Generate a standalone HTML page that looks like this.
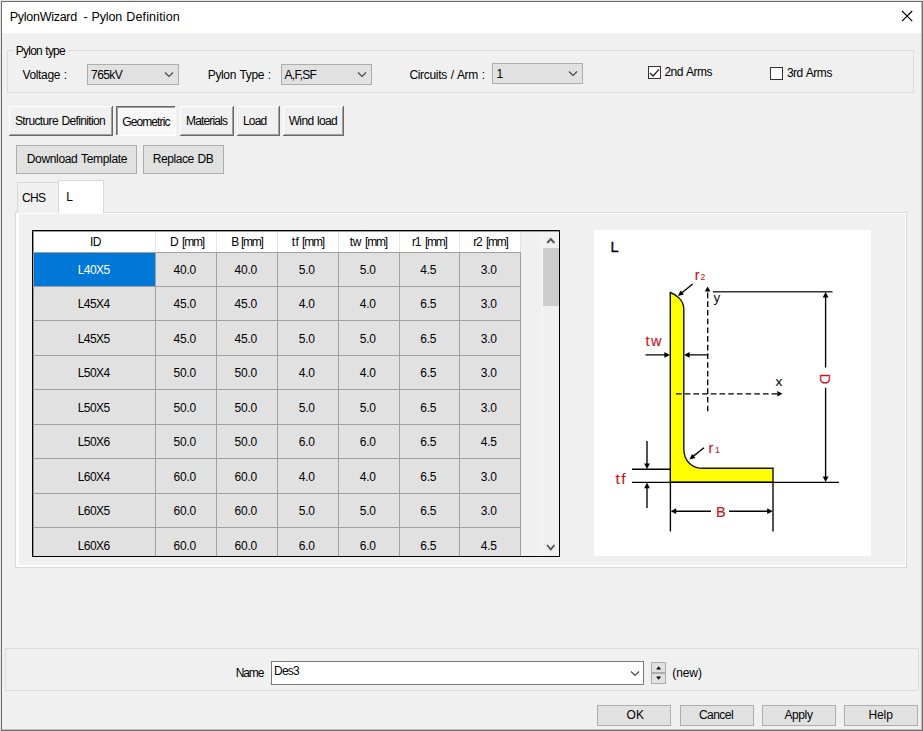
<!DOCTYPE html>
<html><head><meta charset="utf-8"><title>PylonWizard - Pylon Definition</title>
<style>
html,body{margin:0;padding:0;background:#f0f0f0;}
#w{position:relative;width:923px;height:731px;overflow:hidden;font-family:"Liberation Sans", sans-serif;font-size:12px;}
#w div,#w span,#w svg{position:absolute;}
#w span{white-space:pre;line-height:20px;word-spacing:0.8px;}
</style></head><body><div id="w">
<div style="left:0;top:0;width:923px;height:731px;background:#e3e3e3"></div>
<div style="left:1px;top:1px;width:922px;height:730px;background:#6d6d6d"></div>
<div style="left:2px;top:2px;width:920px;height:728px;background:#c0c0c0"></div>
<div style="left:2px;top:2px;width:919px;height:727px;background:#f0f0f0"></div>
<div style="left:2px;top:2px;width:919px;height:31px;background:#fff"></div>
<span style="left:9.80px;top:7.00px;font-size:12.5px;color:#000;letter-spacing:-0.277px;">PylonWizard</span>
<span style="left:83.60px;top:7.00px;font-size:12.5px;color:#000;letter-spacing:0.000px;">-</span>
<span style="left:91.50px;top:7.00px;font-size:12.5px;color:#000;letter-spacing:-0.145px;">Pylon</span>
<span style="left:126.20px;top:7.00px;font-size:12.5px;color:#000;letter-spacing:0.164px;">Definition</span>
<svg style="left:900px;top:9px" width="16" height="16" viewBox="0 0 16 16"><path d="M2 2 L12.2 12.2 M12.2 2 L2 12.2" stroke="#000" stroke-width="1.15" fill="none"/></svg>
<div style="left:7px;top:50px;width:907px;height:43px;border:1px solid #dcdcdc;box-sizing:border-box"></div>
<div style="left:14px;top:44px;width:54px;height:14px;background:#f0f0f0"></div>
<span style="left:15.80px;top:41.00px;font-size:12px;color:#000;letter-spacing:-0.772px;">Pylon type</span>
<span style="left:22.40px;top:65.00px;font-size:12px;color:#000;letter-spacing:-0.339px;">Voltage :</span>
<span style="left:207.80px;top:65.00px;font-size:12px;color:#000;letter-spacing:-0.375px;">Pylon Type :</span>
<span style="left:409.40px;top:65.00px;font-size:12px;color:#000;letter-spacing:-0.314px;">Circuits / Arm :</span>
<div style="left:87px;top:64px;width:92px;height:21px;background:#e1e1e1;border:1px solid #adadad;box-sizing:border-box"></div>
<svg style="left:163px;top:70.0px" width="12" height="9" viewBox="0 0 12 9"><path d="M2 2.5 L6 6.5 L10 2.5" stroke="#444" stroke-width="1.1" fill="none"/></svg>
<span style="left:91.10px;top:65.00px;font-size:12px;color:#000;letter-spacing:-0.608px;">765kV</span>
<div style="left:281px;top:64px;width:91px;height:21px;background:#e1e1e1;border:1px solid #adadad;box-sizing:border-box"></div>
<svg style="left:356px;top:70.0px" width="12" height="9" viewBox="0 0 12 9"><path d="M2 2.5 L6 6.5 L10 2.5" stroke="#444" stroke-width="1.1" fill="none"/></svg>
<span style="left:284.60px;top:65.00px;font-size:12px;color:#000;letter-spacing:-0.743px;">A,F,SF</span>
<div style="left:492px;top:63px;width:91px;height:21px;background:#e1e1e1;border:1px solid #adadad;box-sizing:border-box"></div>
<svg style="left:567px;top:69.0px" width="12" height="9" viewBox="0 0 12 9"><path d="M2 2.5 L6 6.5 L10 2.5" stroke="#444" stroke-width="1.1" fill="none"/></svg>
<span style="left:496.40px;top:64.00px;font-size:12px;color:#000;letter-spacing:0.000px;">1</span>
<div style="left:648px;top:66px;width:13px;height:13px;background:#fff;border:1px solid #333;box-sizing:border-box"></div>
<svg style="left:648px;top:66px" width="13" height="13" viewBox="0 0 13 13"><path d="M2 7 L5.1 10 L11 3.4" stroke="#222" stroke-width="1.3" fill="none"/></svg>
<span style="left:664.40px;top:62.00px;font-size:12px;color:#000;letter-spacing:-0.500px;">2nd Arms</span>
<div style="left:770px;top:67px;width:13px;height:13px;background:#fff;border:1px solid #333;box-sizing:border-box"></div>
<span style="left:786.90px;top:63.00px;font-size:12px;color:#000;letter-spacing:-0.473px;">3rd Arms</span>
<div style="left:9px;top:106px;width:104px;height:30px;background:#696969"></div>
<div style="left:9px;top:106px;width:103px;height:29px;background:#fff"></div>
<div style="left:10px;top:107px;width:102px;height:28px;background:#a0a0a0"></div>
<div style="left:10px;top:107px;width:101px;height:27px;background:#f0f0f0"></div>
<span style="left:15.00px;top:111.00px;font-size:12px;color:#000;letter-spacing:-0.640px;">Structure Definition</span>
<div style="left:116px;top:106px;width:60px;height:30px;background:#fff"></div>
<div style="left:116px;top:106px;width:59px;height:29px;background:#696969"></div>
<div style="left:117px;top:107px;width:58px;height:28px;background:#a0a0a0"></div>
<div style="left:118px;top:108px;width:57px;height:27px;background:#f8f8f8"></div>
<span style="left:122.30px;top:112.00px;font-size:12px;color:#000;letter-spacing:-0.907px;">Geometric</span>
<div style="left:180px;top:106px;width:54px;height:30px;background:#696969"></div>
<div style="left:180px;top:106px;width:53px;height:29px;background:#fff"></div>
<div style="left:181px;top:107px;width:52px;height:28px;background:#a0a0a0"></div>
<div style="left:181px;top:107px;width:51px;height:27px;background:#f0f0f0"></div>
<span style="left:186.00px;top:111.00px;font-size:12px;color:#000;letter-spacing:-0.848px;">Materials</span>
<div style="left:237px;top:106px;width:43px;height:30px;background:#696969"></div>
<div style="left:237px;top:106px;width:42px;height:29px;background:#fff"></div>
<div style="left:238px;top:107px;width:41px;height:28px;background:#a0a0a0"></div>
<div style="left:238px;top:107px;width:40px;height:27px;background:#f0f0f0"></div>
<span style="left:242.90px;top:111.00px;font-size:12px;color:#000;letter-spacing:-0.768px;">Load</span>
<div style="left:283px;top:106px;width:61px;height:30px;background:#696969"></div>
<div style="left:283px;top:106px;width:60px;height:29px;background:#fff"></div>
<div style="left:284px;top:107px;width:59px;height:28px;background:#a0a0a0"></div>
<div style="left:284px;top:107px;width:58px;height:27px;background:#f0f0f0"></div>
<span style="left:288.70px;top:111.00px;font-size:12px;color:#000;letter-spacing:-0.646px;">Wind load</span>
<div style="left:16px;top:145px;width:121px;height:29px;background:#e1e1e1;border:1px solid #adadad;box-sizing:border-box"></div>
<span style="left:26.70px;top:149.00px;font-size:12px;color:#000;letter-spacing:-0.324px;">Download Template</span>
<div style="left:143px;top:145px;width:81px;height:29px;background:#e1e1e1;border:1px solid #adadad;box-sizing:border-box"></div>
<span style="left:152.70px;top:149.00px;font-size:12px;color:#000;letter-spacing:-0.427px;">Replace DB</span>
<div style="left:15px;top:212px;width:892px;height:356px;background:#fff;border:1px solid #d9d9d9;box-sizing:border-box"></div>
<div style="left:19px;top:214px;width:886px;height:351px;background:#f0f0f0"></div>
<div style="left:17px;top:182px;width:42px;height:31px;background:#f0f0f0;border:1px solid #d9d9d9;border-bottom:none;box-sizing:border-box"></div>
<div style="left:58px;top:180px;width:46px;height:34px;background:#fff;border:1px solid #d9d9d9;border-bottom:none;box-sizing:border-box"></div>
<span style="left:22.00px;top:188.00px;font-size:12px;color:#000;letter-spacing:-0.722px;">CHS</span>
<span style="left:66.20px;top:187.00px;font-size:12px;color:#000;letter-spacing:0.000px;">L</span>
<div style="left:32px;top:230px;width:528px;height:327px;background:#f0f0f0;border:1px solid #000;box-sizing:border-box"></div>
<div style="left:33px;top:231px;width:487px;height:21px;background:#fff"></div>
<div style="left:33px;top:231px;width:526px;height:1px;background:#9a9a9a"></div>
<div style="left:33px;top:231px;width:1px;height:325px;background:#9a9a9a"></div>
<div style="left:155px;top:232px;width:1px;height:20px;background:#e5e5e5"></div>
<div style="left:216px;top:232px;width:1px;height:20px;background:#e5e5e5"></div>
<div style="left:277px;top:232px;width:1px;height:20px;background:#e5e5e5"></div>
<div style="left:338px;top:232px;width:1px;height:20px;background:#e5e5e5"></div>
<div style="left:399px;top:232px;width:1px;height:20px;background:#e5e5e5"></div>
<div style="left:459px;top:232px;width:1px;height:20px;background:#e5e5e5"></div>
<div style="left:520px;top:232px;width:1px;height:20px;background:#e5e5e5"></div>
<div style="left:34px;top:252px;width:487px;height:304px;background:#e1e1e1"></div>
<div style="left:34px;top:253px;width:121px;height:33px;background:#0078d7"></div>
<div style="left:34px;top:252px;width:487px;height:1px;background:#a0a0a0"></div>
<div style="left:34px;top:286px;width:487px;height:1px;background:#a0a0a0"></div>
<div style="left:34px;top:320px;width:487px;height:1px;background:#a0a0a0"></div>
<div style="left:34px;top:355px;width:487px;height:1px;background:#a0a0a0"></div>
<div style="left:34px;top:389px;width:487px;height:1px;background:#a0a0a0"></div>
<div style="left:34px;top:424px;width:487px;height:1px;background:#a0a0a0"></div>
<div style="left:34px;top:458px;width:487px;height:1px;background:#a0a0a0"></div>
<div style="left:34px;top:493px;width:487px;height:1px;background:#a0a0a0"></div>
<div style="left:34px;top:527px;width:487px;height:1px;background:#a0a0a0"></div>
<div style="left:155px;top:252px;width:1px;height:304px;background:#a0a0a0"></div>
<div style="left:216px;top:252px;width:1px;height:304px;background:#a0a0a0"></div>
<div style="left:277px;top:252px;width:1px;height:304px;background:#a0a0a0"></div>
<div style="left:338px;top:252px;width:1px;height:304px;background:#a0a0a0"></div>
<div style="left:399px;top:252px;width:1px;height:304px;background:#a0a0a0"></div>
<div style="left:459px;top:252px;width:1px;height:304px;background:#a0a0a0"></div>
<div style="left:520px;top:252px;width:1px;height:304px;background:#a0a0a0"></div>
<span style="left:90.00px;top:232.00px;font-size:12px;color:#000;letter-spacing:-0.700px;">ID</span>
<span style="left:169.90px;top:232.00px;font-size:12px;color:#000;letter-spacing:0.000px;">D</span>
<span style="left:182.00px;top:232.00px;font-size:12px;color:#000;letter-spacing:-1.200px;">[mm]</span>
<span style="left:231.30px;top:232.00px;font-size:12px;color:#000;letter-spacing:0.000px;">B</span>
<span style="left:240.90px;top:232.00px;font-size:12px;color:#000;letter-spacing:-1.200px;">[mm]</span>
<span style="left:291.80px;top:232.00px;font-size:12px;color:#000;letter-spacing:0.428px;">tf</span>
<span style="left:302.00px;top:232.00px;font-size:12px;color:#000;letter-spacing:-1.200px;">[mm]</span>
<span style="left:349.80px;top:232.00px;font-size:12px;color:#000;letter-spacing:-0.400px;">tw</span>
<span style="left:365.00px;top:232.00px;font-size:12px;color:#000;letter-spacing:-1.200px;">[mm]</span>
<span style="left:411.90px;top:232.00px;font-size:12px;color:#000;letter-spacing:-1.200px;">r1</span>
<span style="left:424.90px;top:232.00px;font-size:12px;color:#000;letter-spacing:-1.200px;">[mm]</span>
<span style="left:473.20px;top:232.00px;font-size:12px;color:#000;letter-spacing:-1.200px;">r2</span>
<span style="left:485.90px;top:232.00px;font-size:12px;color:#000;letter-spacing:-1.200px;">[mm]</span>
<span style="left:77.65px;top:260.00px;font-size:12px;color:#fff;letter-spacing:-0.551px;">L40X5</span>
<span style="left:173.50px;top:260.00px;font-size:12px;color:#000;letter-spacing:-0.186px;">40.0</span>
<span style="left:234.50px;top:260.00px;font-size:12px;color:#000;letter-spacing:-0.186px;">40.0</span>
<span style="left:298.80px;top:260.00px;font-size:12px;color:#000;letter-spacing:-0.244px;">5.0</span>
<span style="left:359.80px;top:260.00px;font-size:12px;color:#000;letter-spacing:-0.244px;">5.0</span>
<span style="left:420.30px;top:260.00px;font-size:12px;color:#000;letter-spacing:-0.244px;">4.5</span>
<span style="left:480.80px;top:260.00px;font-size:12px;color:#000;letter-spacing:-0.244px;">3.0</span>
<span style="left:77.65px;top:294.00px;font-size:12px;color:#000;letter-spacing:-0.551px;">L45X4</span>
<span style="left:173.50px;top:294.00px;font-size:12px;color:#000;letter-spacing:-0.186px;">45.0</span>
<span style="left:234.50px;top:294.00px;font-size:12px;color:#000;letter-spacing:-0.186px;">45.0</span>
<span style="left:298.80px;top:294.00px;font-size:12px;color:#000;letter-spacing:-0.244px;">4.0</span>
<span style="left:359.80px;top:294.00px;font-size:12px;color:#000;letter-spacing:-0.244px;">4.0</span>
<span style="left:420.30px;top:294.00px;font-size:12px;color:#000;letter-spacing:-0.244px;">6.5</span>
<span style="left:480.80px;top:294.00px;font-size:12px;color:#000;letter-spacing:-0.244px;">3.0</span>
<span style="left:77.65px;top:329.00px;font-size:12px;color:#000;letter-spacing:-0.551px;">L45X5</span>
<span style="left:173.50px;top:329.00px;font-size:12px;color:#000;letter-spacing:-0.186px;">45.0</span>
<span style="left:234.50px;top:329.00px;font-size:12px;color:#000;letter-spacing:-0.186px;">45.0</span>
<span style="left:298.80px;top:329.00px;font-size:12px;color:#000;letter-spacing:-0.244px;">5.0</span>
<span style="left:359.80px;top:329.00px;font-size:12px;color:#000;letter-spacing:-0.244px;">5.0</span>
<span style="left:420.30px;top:329.00px;font-size:12px;color:#000;letter-spacing:-0.244px;">6.5</span>
<span style="left:480.80px;top:329.00px;font-size:12px;color:#000;letter-spacing:-0.244px;">3.0</span>
<span style="left:77.65px;top:363.00px;font-size:12px;color:#000;letter-spacing:-0.551px;">L50X4</span>
<span style="left:173.50px;top:363.00px;font-size:12px;color:#000;letter-spacing:-0.186px;">50.0</span>
<span style="left:234.50px;top:363.00px;font-size:12px;color:#000;letter-spacing:-0.186px;">50.0</span>
<span style="left:298.80px;top:363.00px;font-size:12px;color:#000;letter-spacing:-0.244px;">4.0</span>
<span style="left:359.80px;top:363.00px;font-size:12px;color:#000;letter-spacing:-0.244px;">4.0</span>
<span style="left:420.30px;top:363.00px;font-size:12px;color:#000;letter-spacing:-0.244px;">6.5</span>
<span style="left:480.80px;top:363.00px;font-size:12px;color:#000;letter-spacing:-0.244px;">3.0</span>
<span style="left:77.65px;top:398.00px;font-size:12px;color:#000;letter-spacing:-0.551px;">L50X5</span>
<span style="left:173.50px;top:398.00px;font-size:12px;color:#000;letter-spacing:-0.186px;">50.0</span>
<span style="left:234.50px;top:398.00px;font-size:12px;color:#000;letter-spacing:-0.186px;">50.0</span>
<span style="left:298.80px;top:398.00px;font-size:12px;color:#000;letter-spacing:-0.244px;">5.0</span>
<span style="left:359.80px;top:398.00px;font-size:12px;color:#000;letter-spacing:-0.244px;">5.0</span>
<span style="left:420.30px;top:398.00px;font-size:12px;color:#000;letter-spacing:-0.244px;">6.5</span>
<span style="left:480.80px;top:398.00px;font-size:12px;color:#000;letter-spacing:-0.244px;">3.0</span>
<span style="left:77.65px;top:432.00px;font-size:12px;color:#000;letter-spacing:-0.551px;">L50X6</span>
<span style="left:173.50px;top:432.00px;font-size:12px;color:#000;letter-spacing:-0.186px;">50.0</span>
<span style="left:234.50px;top:432.00px;font-size:12px;color:#000;letter-spacing:-0.186px;">50.0</span>
<span style="left:298.80px;top:432.00px;font-size:12px;color:#000;letter-spacing:-0.244px;">6.0</span>
<span style="left:359.80px;top:432.00px;font-size:12px;color:#000;letter-spacing:-0.244px;">6.0</span>
<span style="left:420.30px;top:432.00px;font-size:12px;color:#000;letter-spacing:-0.244px;">6.5</span>
<span style="left:480.80px;top:432.00px;font-size:12px;color:#000;letter-spacing:-0.244px;">4.5</span>
<span style="left:77.65px;top:467.00px;font-size:12px;color:#000;letter-spacing:-0.551px;">L60X4</span>
<span style="left:173.50px;top:467.00px;font-size:12px;color:#000;letter-spacing:-0.186px;">60.0</span>
<span style="left:234.50px;top:467.00px;font-size:12px;color:#000;letter-spacing:-0.186px;">60.0</span>
<span style="left:298.80px;top:467.00px;font-size:12px;color:#000;letter-spacing:-0.244px;">4.0</span>
<span style="left:359.80px;top:467.00px;font-size:12px;color:#000;letter-spacing:-0.244px;">4.0</span>
<span style="left:420.30px;top:467.00px;font-size:12px;color:#000;letter-spacing:-0.244px;">6.5</span>
<span style="left:480.80px;top:467.00px;font-size:12px;color:#000;letter-spacing:-0.244px;">3.0</span>
<span style="left:77.65px;top:501.00px;font-size:12px;color:#000;letter-spacing:-0.551px;">L60X5</span>
<span style="left:173.50px;top:501.00px;font-size:12px;color:#000;letter-spacing:-0.186px;">60.0</span>
<span style="left:234.50px;top:501.00px;font-size:12px;color:#000;letter-spacing:-0.186px;">60.0</span>
<span style="left:298.80px;top:501.00px;font-size:12px;color:#000;letter-spacing:-0.244px;">5.0</span>
<span style="left:359.80px;top:501.00px;font-size:12px;color:#000;letter-spacing:-0.244px;">5.0</span>
<span style="left:420.30px;top:501.00px;font-size:12px;color:#000;letter-spacing:-0.244px;">6.5</span>
<span style="left:480.80px;top:501.00px;font-size:12px;color:#000;letter-spacing:-0.244px;">3.0</span>
<span style="left:77.65px;top:536.00px;font-size:12px;color:#000;letter-spacing:-0.551px;">L60X6</span>
<span style="left:173.50px;top:536.00px;font-size:12px;color:#000;letter-spacing:-0.186px;">60.0</span>
<span style="left:234.50px;top:536.00px;font-size:12px;color:#000;letter-spacing:-0.186px;">60.0</span>
<span style="left:298.80px;top:536.00px;font-size:12px;color:#000;letter-spacing:-0.244px;">6.0</span>
<span style="left:359.80px;top:536.00px;font-size:12px;color:#000;letter-spacing:-0.244px;">6.0</span>
<span style="left:420.30px;top:536.00px;font-size:12px;color:#000;letter-spacing:-0.244px;">6.5</span>
<span style="left:480.80px;top:536.00px;font-size:12px;color:#000;letter-spacing:-0.244px;">4.5</span>
<div style="left:542px;top:232px;width:1px;height:324px;background:#f8f8f8"></div>
<div style="left:543px;top:248px;width:15.5px;height:58px;background:#cdcdcd"></div>
<svg style="left:543px;top:234px" width="16" height="12" viewBox="0 0 16 12"><path d="M4.2 9 L7.8 5 L11.4 9" stroke="#555" stroke-width="1.9" fill="none"/></svg>
<svg style="left:543px;top:541px" width="16" height="12" viewBox="0 0 16 12"><path d="M4.2 4 L7.8 8.5 L11.4 4" stroke="#555" stroke-width="1.9" fill="none"/></svg>
<div style="left:32px;top:556px;width:528px;height:1px;background:#000"></div>
<div style="left:594px;top:230px;width:277px;height:326px;background:#fff"></div>
<span style="left:610.40px;top:237.00px;font-size:14.5px;color:#000;letter-spacing:0.000px;-webkit-text-stroke:0.3px currentColor">L</span>
<svg style="left:594px;top:230px" width="277" height="326" viewBox="594 230 277 326">
<path d="M670.3 292.5 C676 294.5 683.8 300 683.8 309 L683.8 449 C683.8 461 692 468.3 703 468.3 L773 468.3 L773 482.3 L670.3 482.3 Z" fill="#ffff00" stroke="#111" stroke-width="1.4"/>
<g stroke="#000" stroke-width="1.35" fill="none">
<path d="M713 291.7 H832.5" stroke="#333" stroke-width="1.6"/>
<path d="M825.6 296 V367.5 M825.6 387.7 V478"/>
<path d="M632 469.2 H670 M632 482.3 H839"/>
<path d="M647 441 V465 M647 508 V487"/>
<path d="M670.4 482.3 V531.5 M773 482.3 V531.5"/>
<path d="M675 511.2 H711 M729 511.2 H768"/>
<path d="M645.5 354.9 H665.5 M708.4 354.9 H688.5"/>
<path d="M692.7 283.9 L681 293.5"/>
<path d="M704 447.7 L692.5 456.9"/>
<path d="M707.7 292.6 V413.5" stroke-dasharray="5.6 3.1"/>
<path d="M676 393.8 H778" stroke-dasharray="5.6 3.1"/>
</g>
<g fill="#000" stroke="none">
<path d="M825.6 292.0 L828.5 297.6 L822.7 297.6 Z"/>
<path d="M825.6 482.0 L822.7 476.4 L828.5 476.4 Z"/>
<path d="M647.0 469.0 L644.1 463.4 L649.9 463.4 Z"/>
<path d="M647.0 482.6 L649.9 488.2 L644.1 488.2 Z"/>
<path d="M670.6 511.2 L676.2 508.3 L676.2 514.1 Z"/>
<path d="M772.8 511.2 L767.2 514.1 L767.2 508.3 Z"/>
<path d="M670.0 354.9 L664.4 357.8 L664.4 352.0 Z"/>
<path d="M684.0 354.9 L689.6 352.0 L689.6 357.8 Z"/>
<path d="M707.6 286.6 L710.4 291.5 L704.8 291.5 Z"/>
<path d="M782.5 393.8 L777.3 396.5 L777.3 391.1 Z"/>
<path d="M677.9 296.0 L680.6 290.4 L683.9 294.5 Z"/>
<path d="M689.3 459.4 L692.1 453.9 L695.3 457.9 Z"/>
</g>
</svg>
<span style="left:694.8px;top:265px;font-size:14.5px;color:#c8141e;-webkit-text-stroke:0.15px currentColor">r<small style="font-size:8.5px;margin-left:0.9px;-webkit-text-stroke:0.1px currentColor">2</small></span>
<span style="left:713.40px;top:288.00px;font-size:13.5px;color:#111;letter-spacing:0.000px;">y</span>
<span style="left:645.60px;top:331.00px;font-size:14.5px;color:#c8141e;letter-spacing:1.500px;-webkit-text-stroke:0.15px currentColor">tw</span>
<span style="left:775.40px;top:372.00px;font-size:13.5px;color:#111;letter-spacing:0.000px;-webkit-text-stroke:0.15px currentColor">x</span>
<span style="left:708.6px;top:438px;font-size:14.5px;color:#c8141e;-webkit-text-stroke:0.15px currentColor">r<small style="font-size:8.5px;margin-left:1.5px;-webkit-text-stroke:0.1px currentColor">1</small></span>
<span style="left:615.40px;top:469.00px;font-size:15.5px;color:#c8141e;letter-spacing:1.500px;-webkit-text-stroke:0.15px currentColor">tf</span>
<span style="left:716.00px;top:502.00px;font-size:14.5px;color:#c8141e;letter-spacing:0.000px;-webkit-text-stroke:0.15px currentColor">B</span>
<span style="left:819px;top:372.5px;font-size:14.5px;color:#c8141e;line-height:12px;height:12px;width:12px;transform:rotate(90deg);transform-origin:6px 6px;text-align:center;-webkit-text-stroke:0.15px currentColor">D</span>
<div style="left:5px;top:648px;width:914px;height:43px;border:1px solid #dcdcdc;box-sizing:border-box"></div>
<span style="left:235.80px;top:663.00px;font-size:12px;color:#000;letter-spacing:-1.139px;">Name</span>
<div style="left:271px;top:661px;width:373px;height:24px;background:#fff;border:1px solid #7a7a7a;box-sizing:border-box"></div>
<span style="left:274.10px;top:661.00px;font-size:12px;color:#000;letter-spacing:-0.805px;">Des3</span>
<svg style="left:629px;top:669px" width="12" height="9" viewBox="0 0 12 9"><path d="M2 2.5 L6 6.5 L10 2.5" stroke="#444" stroke-width="1.1" fill="none"/></svg>
<div style="left:651px;top:662px;width:15px;height:11px;background:#e1e1e1;border:1px solid #adadad;box-sizing:border-box"></div>
<div style="left:651px;top:673px;width:15px;height:11px;background:#e1e1e1;border:1px solid #adadad;box-sizing:border-box"></div>
<svg style="left:651px;top:662px" width="15" height="22" viewBox="0 0 15 22"><path d="M7.6 4.2 L10.2 7.4 L5 7.4 Z M7.6 17.8 L10.2 14.6 L5 14.6 Z" fill="#111"/></svg>
<span style="left:672.30px;top:663.00px;font-size:12px;color:#000;letter-spacing:-0.104px;">(new)</span>
<div style="left:597px;top:705px;width:74px;height:21px;background:#e1e1e1;border:1px solid #adadad;box-sizing:border-box"></div>
<span style="left:626.40px;top:705.00px;font-size:12px;color:#000;letter-spacing:0.156px;">OK</span>
<div style="left:680px;top:705px;width:74px;height:21px;background:#e1e1e1;border:1px solid #adadad;box-sizing:border-box"></div>
<span style="left:698.90px;top:705.00px;font-size:12px;color:#000;letter-spacing:-0.512px;">Cancel</span>
<div style="left:762px;top:705px;width:74px;height:21px;background:#e1e1e1;border:1px solid #adadad;box-sizing:border-box"></div>
<span style="left:784.40px;top:705.00px;font-size:12px;color:#000;letter-spacing:-0.383px;">Apply</span>
<div style="left:844px;top:705px;width:74px;height:21px;background:#e1e1e1;border:1px solid #adadad;box-sizing:border-box"></div>
<span style="left:868.40px;top:705.00px;font-size:12px;color:#000;letter-spacing:-0.062px;">Help</span>
</div></body></html>
